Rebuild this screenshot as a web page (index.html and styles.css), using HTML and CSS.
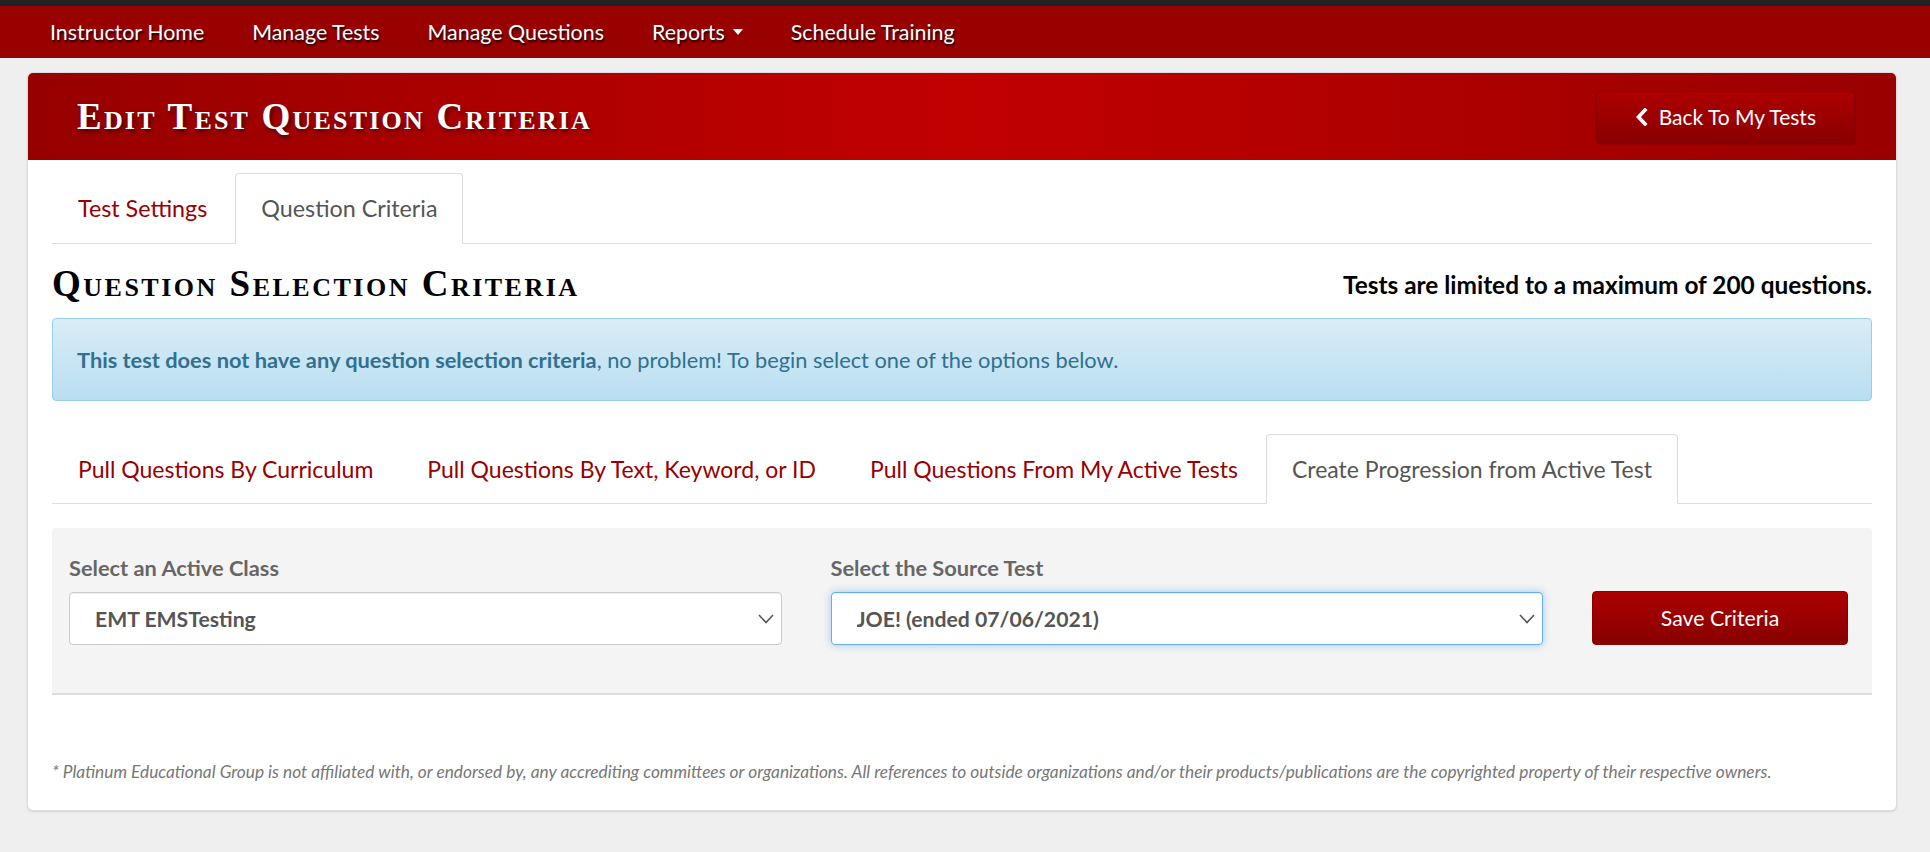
FILE: index.html
```html
<!DOCTYPE html>
<html lang="en">
<head>
  <meta charset="UTF-8">
  <meta name="viewport" content="width=device-width, initial-scale=1.0">
  <title>Edit Test Question Criteria</title>
  <link rel="stylesheet" href="styles.css">
</head>
<body>
  <nav class="navbar">
    <ul class="nav-links">
      <li><a href="#">Instructor Home</a></li>
      <li><a href="#">Manage Tests</a></li>
      <li><a href="#">Manage Questions</a></li>
      <li><a href="#">Reports <span class="caret"></span></a></li>
      <li><a href="#">Schedule Training</a></li>
    </ul>
  </nav>

  <main class="page">
    <section class="card">
      <header class="card-header">
        <h1 class="card-title">Edit Test Question Criteria</h1>
        <a href="#" class="btn-back">
          <svg width="13" height="18" viewBox="0 0 13 18"><path d="M10 2 L3.5 9 L10 16" fill="none" stroke="#fff" stroke-width="3.6" stroke-linecap="square"/></svg>
          Back To My Tests
        </a>
      </header>

      <div class="card-body">
        <ul class="tabs">
          <li><a href="#">Test Settings</a></li>
          <li class="active"><a href="#">Question Criteria</a></li>
        </ul>

        <div class="section-head">
          <h2>Question Selection Criteria</h2>
          <p class="limit">Tests are limited to a maximum of 200 questions.</p>
        </div>

        <div class="alert-info">
          <strong>This test does not have any question selection criteria</strong>, no problem! To begin select one of the options below.
        </div>

        <ul class="tabs tabs-criteria">
          <li><a href="#">Pull Questions By Curriculum</a></li>
          <li><a href="#">Pull Questions By Text, Keyword, or ID</a></li>
          <li><a href="#">Pull Questions From My Active Tests</a></li>
          <li class="active"><a href="#">Create Progression from Active Test</a></li>
        </ul>

        <form class="well">
          <div class="field">
            <label for="activeClass">Select an Active Class</label>
            <div class="select-wrap">
              <select id="activeClass">
                <option>EMT EMSTesting</option>
              </select>
              <svg class="chevron" width="16" height="10" viewBox="0 0 16 10"><path d="M1 1 L8 8.5 L15 1" fill="none" stroke="#555" stroke-width="1.6"/></svg>
            </div>
          </div>
          <div class="field">
            <label for="sourceTest">Select the Source Test</label>
            <div class="select-wrap">
              <select id="sourceTest" class="focused">
                <option>JOE! (ended 07/06/2021)</option>
              </select>
              <svg class="chevron" width="16" height="10" viewBox="0 0 16 10"><path d="M1 1 L8 8.5 L15 1" fill="none" stroke="#555" stroke-width="1.6"/></svg>
            </div>
          </div>
          <button type="button" class="btn-save">Save Criteria</button>
        </form>

        <p class="footnote">* Platinum Educational Group is not affiliated with, or endorsed by, any accrediting committees or organizations. All references to outside organizations and/or their products/publications are the copyrighted property of their respective owners.</p>
      </div>
    </section>
  </main>
</body>
</html>
```

FILE: styles.css
```css
/* Page */
body {
  margin: 0;
  background: #efefef;
  font-family: Lato, 'Liberation Sans', sans-serif;
  color: #333;
}

/* Top navigation */
.navbar {
  background: #990000;
  border-top: 6px solid #222;
  height: 52px;
  display: flex;
  align-items: center;
  padding-left: 26px;
}

.nav-links {
  list-style: none;
  margin: 0;
  padding: 0;
  display: flex;
}

.nav-links a {
  display: flex;
  align-items: center;
  padding: 0 24px;
  line-height: 52px;
  color: #fff;
  font-size: 21.4px;
  text-decoration: none;
  text-shadow: 1px 2px 2px rgba(0, 0, 0, 0.85);
}

.caret {
  display: inline-block;
  margin-left: 8px;
  border-top: 6px solid #fff;
  border-left: 5px solid transparent;
  border-right: 5px solid transparent;
}

/* Card */
.page {
  padding: 14px 33px 40px 27px;
}

.card {
  background: #fff;
  border: 1px solid #ddd;
  border-radius: 6px;
  overflow: hidden;
  box-shadow: 0 1px 2px rgba(0, 0, 0, 0.12);
}

.card-header {
  height: 87px;
  display: flex;
  align-items: center;
  justify-content: space-between;
  padding: 0 41px 0 49px;
  background: linear-gradient(to right, #970000, #c20000 50%, #9a0000);
}

.card-title {
  margin: 0;
  color: #fff;
  font-family: 'Liberation Serif', serif;
  font-variant: small-caps;
  font-weight: bold;
  font-size: 37px;
  letter-spacing: 2.2px;
  text-shadow: 2px 3px 4px rgba(0, 0, 0, 0.5);
}

.btn-back {
  display: flex;
  align-items: center;
  gap: 11px;
  height: 50px;
  padding: 0 38px 0 38px;
  border: 1px solid #8a0000;
  border-radius: 4px;
  background: linear-gradient(#ad0000, #8a0000);
  box-shadow: 0 1px 2px rgba(0, 0, 0, 0.3);
  color: #fff;
  font-size: 21px;
  text-decoration: none;
}

.card-body {
  padding: 13px 24px 28px;
}

/* Tabs */
.tabs {
  list-style: none;
  margin: 0;
  padding: 0;
  display: flex;
  border-bottom: 1px solid #ddd;
}

.tabs li {
  margin-right: 2px;
  margin-bottom: -1px;
}

.tabs a {
  display: block;
  padding: 22px 25px 23px;
  line-height: 24px;
  font-size: 23.3px;
  color: #990000;
  text-decoration: none;
  border: 1px solid transparent;
  border-radius: 4px 4px 0 0;
}

.tabs .active a {
  color: #555;
  background: #fff;
  border-color: #ddd #ddd transparent;
}

.tabs-criteria {
  margin-top: 33px;
}

.tabs-criteria a {
  padding-bottom: 22px;
  font-size: 23px;
}

/* Section heading */
.section-head {
  display: flex;
  align-items: center;
  justify-content: space-between;
  margin: 20px 0 14px;
}

.section-head h2 {
  margin: 0;
  line-height: 40px;
  color: #000;
  font-family: 'Liberation Serif', serif;
  font-variant: small-caps;
  font-weight: bold;
  font-size: 37px;
  letter-spacing: 2.5px;
}

.limit {
  margin: 0;
  color: #000;
  font-weight: bold;
  font-size: 24.4px;
}

/* Info alert */
.alert-info {
  padding: 29px 24px 28px;
  line-height: 24px;
  font-size: 21.8px;
  color: #31708f;
  background: linear-gradient(#d9edf7, #b9def0);
  border: 1px solid #9acfea;
  border-radius: 4px;
}

/* Criteria form */
.well {
  display: grid;
  grid-template-columns: 1fr 1fr 256px;
  gap: 49px;
  align-items: end;
  margin-top: 24px;
  padding: 28px 24px 48px 17px;
  background: #f4f4f4;
  border-bottom: 2px solid #ddd;
  border-radius: 4px 4px 0 0;
}

.field label {
  display: block;
  margin-bottom: 12px;
  line-height: 24px;
  font-size: 21.8px;
  font-weight: bold;
  color: #666;
}

.select-wrap {
  position: relative;
}

.select-wrap select {
  display: block;
  width: 100%;
  height: 53px;
  padding: 0 40px 0 25px;
  appearance: none;
  background: #fff;
  border: 1px solid #ccc;
  border-radius: 4px;
  box-shadow: inset 0 1px 1px rgba(0, 0, 0, 0.075);
  font-family: inherit;
  font-size: 21.2px;
  font-weight: bold;
  color: #555;
}

.select-wrap select.focused {
  border-color: #66afe9;
  box-shadow: inset 0 1px 1px rgba(0, 0, 0, 0.075), 0 0 8px rgba(102, 175, 233, 0.6);
}

.chevron {
  position: absolute;
  right: 8px;
  top: 22px;
  pointer-events: none;
}

.btn-save {
  height: 54px;
  border: 1px solid #880000;
  border-radius: 4px;
  background: linear-gradient(#ad0000, #880000);
  color: #fff;
  font-family: inherit;
  font-size: 21.3px;
  cursor: pointer;
}

/* Footnote */
.footnote {
  margin: 67px 0 0;
  line-height: 20px;
  font-size: 17.3px;
  font-style: italic;
  color: #777;
}
```
